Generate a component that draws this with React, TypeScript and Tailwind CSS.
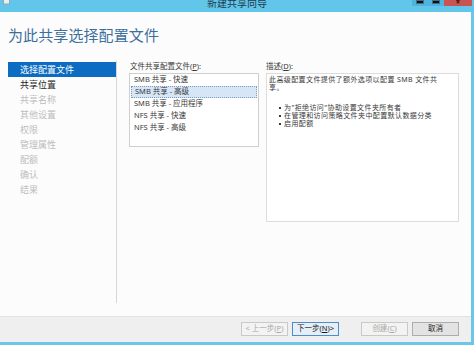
import React from 'react';

const navItems = [
  { name: '选择配置文件', state: 'active' },
  { name: '共享位置', state: 'next' },
  { name: '共享名称', state: 'off' },
  { name: '其他设置', state: 'off' },
  { name: '权限', state: 'off' },
  { name: '管理属性', state: 'off' },
  { name: '配额', state: 'off' },
  { name: '确认', state: 'off' },
  { name: '结果', state: 'off' },
];

const profiles = ['SMB 共享 - 快速', 'SMB 共享 - 高级', 'SMB 共享 - 应用程序', 'NFS 共享 - 快速', 'NFS 共享 - 高级'];

const bullets = ['为"拒绝访问"协助设置文件夹所有者', '在管理和访问策略文件夹中配置默认数据分类', '启用配额'];

function TitleBar() {
  return (
    <div className="grid grid-cols-[1fr_auto_1fr] h-[12px] overflow-hidden bg-[#62c6ea]">
      <div className="flex items-start pl-[3px]">
        <svg width="7" height="5" viewBox="0 0 7 5">
          <rect x="0.5" y="-2" width="6" height="6" fill="#e8eef2" stroke="#8fa6b4" strokeWidth="1" />
        </svg>
      </div>
      <div className="-mt-[2px] text-[10px] leading-[10px] text-[#1d3a4c]">新建共享向导</div>
      <div className="flex justify-end items-start pr-[2px]">
        <div className="w-[16px] h-[6px] bg-[#4fb4dd] flex justify-center">
          <div className="w-[8px] h-[4px] bg-[#111] border border-[#3d6f86]" />
        </div>
        <div className="w-[16px] h-[6px] bg-[#4fb4dd] flex justify-center">
          <div className="w-[8px] h-[4px] bg-[#111] border border-[#3d6f86]" />
        </div>
        <div className="w-[28px] h-[6px] bg-[#c75450] flex justify-center">
          <svg width="8" height="5" viewBox="0 0 8 5">
            <path d="M1 -2 L5 3 M7 -2 L3 3" stroke="#5a1f1d" strokeWidth="1.6" />
          </svg>
        </div>
      </div>
    </div>
  );
}

function Button({ label, accel, pre, post, kind }: { label: string; accel: string; pre?: string; post?: string; kind: 'disabled' | 'default' | 'normal' }) {
  const cls =
    kind === 'disabled'
      ? 'border-[#c9c9c9] bg-[#f3f3f3] text-[#a8a8a8]'
      : kind === 'default'
      ? 'border-[#4a8fcb] bg-[#e6eef7] text-[#1a1a1a]'
      : 'border-[#adadad] bg-[#e3e3e3] text-[#1a1a1a]';
  return (
    <div className={`h-[14px] w-[47px] border flex items-center justify-center text-[7.5px] leading-none whitespace-nowrap ${cls}`}>
      {pre}
      {label}
      {accel && (
        <span>
          (<u>{accel}</u>)
        </span>
      )}
      {post}
    </div>
  );
}

export default function App() {
  return (
    <div className="w-[474px] h-[345px] flex flex-col bg-[#6cc7e7] font-['Noto_Sans','Noto_Sans_CJK_SC',sans-serif] text-[#3a3a3a] overflow-hidden">
      <TitleBar />
      <div className="flex-1 flex flex-col mr-[3px] mb-[3px]">
        <div className="flex-1 flex flex-col bg-[#fcfcfc]">
          <div className="h-[49px] pl-[8px] pt-[15px]">
            <h1 className="text-[15px] leading-[17px] text-[#3d6f9c] tracking-[0.1px]">为此共享选择配置文件</h1>
          </div>
          <div className="flex h-[242px]">
            <nav className="w-[109px] ml-[8px] border-r border-[#d6d6d6] pt-[1px]">
              {navItems.map((item) => (
                <div
                  key={item.name}
                  className={`h-[15px] pl-[12px] flex items-center text-[9px] leading-none ${
                    item.state === 'active'
                      ? 'bg-[#0b6cc1] text-white'
                      : item.state === 'next'
                      ? 'text-[#1e1e1e]'
                      : 'text-[#bdbdbd]'
                  }`}
                >
                  {item.name}
                </div>
              ))}
            </nav>
            <div className="ml-[12px] w-[130px] flex flex-col">
              <div className="h-[10px] pl-[1px] text-[7.5px] leading-[10px] mb-[2px]">
                文件共享配置文件(<u>P</u>):
              </div>
              <div className="h-[74px] border border-[#cfcfcf] bg-white p-[1px] pt-0">
                {profiles.map((p, i) => (
                  <div
                    key={p}
                    className={`h-[12px] flex items-center pl-[3px] text-[7.5px] leading-none whitespace-nowrap ${
                      i === 1 ? 'bg-[#d7e6f6] border border-dotted border-[#7b9cc4] pl-[2px]' : ''
                    }`}
                  >
                    {p}
                  </div>
                ))}
              </div>
            </div>
            <div className="ml-[7px] w-[193px] flex flex-col">
              <div className="h-[10px] text-[7.5px] leading-[10px] mb-[2px]">
                描述(<u>D</u>):
              </div>
              <div className="h-[149px] border border-[#dcdcdc] bg-white pl-[2px] pt-[2px] text-[7px] leading-[8px] tracking-[0.4px] whitespace-nowrap">
                <p>此高级配置文件提供了额外选项以配置 SMB 文件共</p>
                <p>享。</p>
                <ul className="mt-[12px] pl-[15px]">
                  {bullets.map((b) => (
                    <li key={b} className="relative h-[8px]">
                      <span className="absolute -left-[5px] top-[3px] w-[2px] h-[2px] bg-[#3a3a3a]" />
                      {b}
                    </li>
                  ))}
                </ul>
              </div>
            </div>
          </div>
        </div>
        <div className="h-[26px] bg-[#efefef] border-t border-[#e2e2e2] flex items-start pt-[5px] pr-[12px] justify-end">
          <Button pre="< " label="上一步" accel="P" kind="disabled" />
          <div className="ml-[4px]">
            <Button label="下一步" accel="N" post=" >" kind="default" />
          </div>
          <div className="ml-[22px]">
            <Button label="创建" accel="C" kind="disabled" />
          </div>
          <div className="ml-[4px]">
            <Button label="取消" accel="" kind="normal" />
          </div>
        </div>
      </div>
    </div>
  );
}
